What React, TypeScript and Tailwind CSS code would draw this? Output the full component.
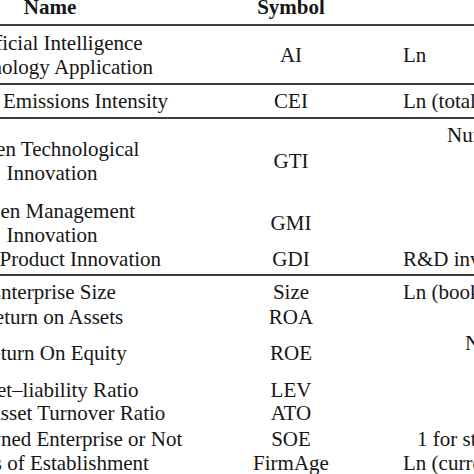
import React from "react";

const nameCell = "flex flex-col items-center justify-center pr-[104px] whitespace-nowrap";
const symCell = "flex items-center justify-center whitespace-nowrap";
const defCell = "flex items-center whitespace-nowrap";

function Rule() {
  return <div className="h-[2px] bg-[#3c3c3c]" />;
}

export default function App() {
  return (
    <div className="w-[474px] h-[474px] overflow-hidden bg-white text-[#161616] font-['Liberation_Serif','Times_New_Roman',serif] text-[21px] leading-[24px]">
      {/* header */}
      <div className="grid grid-cols-[208px_166px_1fr] h-[24px] font-bold leading-[15px]">
        <div className="flex justify-center pr-[108px] whitespace-nowrap">Name</div>
        <div className="flex justify-center whitespace-nowrap">Symbol</div>
        <div />
      </div>
      <Rule />
      {/* AI */}
      <div className="grid grid-cols-[208px_166px_1fr] h-[57px]">
        <div className={nameCell}>
          <span>Artificial Intelligence</span>
          <span>Technology Application</span>
        </div>
        <div className={symCell}>AI</div>
        <div className={`${defCell} pl-[29px]`}>Ln</div>
      </div>
      <Rule />
      {/* CEI */}
      <div className="grid grid-cols-[208px_166px_1fr] h-[32px]">
        <div className={nameCell}>Carbon Emissions Intensity</div>
        <div className={symCell}>CEI</div>
        <div className={`${defCell} pl-[29px]`}>Ln (total carbon emissions/operating revenue)</div>
      </div>
      <Rule />
      {/* Green innovation */}
      <div className="grid grid-cols-[208px_166px_1fr] grid-rows-[83px_41px_31px]">
        <div className={nameCell}>
          <span>Green Technological</span>
          <span>Innovation</span>
        </div>
        <div className={symCell}>GTI</div>
        <div className="flex items-start whitespace-nowrap pt-[4px] pl-[73px]">Number of green invention patents</div>

        <div className={nameCell}>
          <span>Green Management</span>
          <span>Innovation</span>
        </div>
        <div className={symCell}>GMI</div>
        <div />

        <div className={nameCell}>Green Product Innovation</div>
        <div className={symCell}>GDI</div>
        <div className={`${defCell} pl-[29px]`}>R&amp;D investment in green products</div>
      </div>
      <Rule />
      {/* controls */}
      <div className="grid grid-cols-[208px_166px_1fr] grid-rows-[32px_17px_56px_17px_30px_22px_25px]">
        <div className={nameCell}>Enterprise Size</div>
        <div className={symCell}>Size</div>
        <div className={`${defCell} pl-[29px]`}>Ln (book value of total assets)</div>

        <div className={nameCell}>Return on Assets</div>
        <div className={symCell}>ROA</div>
        <div className={`${defCell} row-span-2 pl-[91px] pb-[4px]`}>Net profit/total assets</div>

        <div className={nameCell}>Return On Equity</div>
        <div className={symCell}>ROE</div>

        <div className={nameCell}>Asset–liability Ratio</div>
        <div className={symCell}>LEV</div>
        <div />

        <div className={nameCell}>Total Asset Turnover Ratio</div>
        <div className={symCell}>ATO</div>
        <div />

        <div className={nameCell}>State-Owned Enterprise or Not</div>
        <div className={symCell}>SOE</div>
        <div className={`${defCell} pl-[43px]`}>1 for state-owned enterprises, 0 otherwise</div>

        <div className={nameCell}>Years of Establishment</div>
        <div className={symCell}>FirmAge</div>
        <div className={`${defCell} pl-[29px]`}>Ln (current year − establishment year + 1)</div>
      </div>
    </div>
  );
}
